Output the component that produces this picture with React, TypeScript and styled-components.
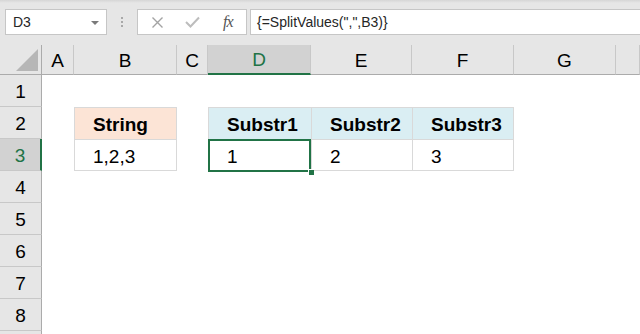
import * as React from 'react'
import styled, { createGlobalStyle, css } from 'styled-components'

const GlobalStyle = createGlobalStyle`
  html, body {
    margin: 0;
    padding: 0;
    background: #ffffff;
  }
  body {
    font-family: "Liberation Sans", Arial, sans-serif;
  }
`

const Window = styled.div`
  width: 640px;
  height: 334px;
  overflow: hidden;
  background: #ffffff;
`

const Toolbar = styled.div`
  height: 45px;
  box-sizing: border-box;
  padding: 9px 0 0 5px;
  display: flex;
  align-items: flex-start;
  background: linear-gradient(#d6d6d6 0px, #e6e6e6 3px, #e6e6e6 100%);
`

const NameBox = styled.div`
  width: 102px;
  height: 26px;
  box-sizing: border-box;
  border: 1px solid #c6c6c6;
  background: #ffffff;
  display: flex;
  align-items: center;
  justify-content: space-between;
  padding: 0 7px 0 7px;
  font-size: 14px;
  color: #262626;
`

const DropArrow = styled.span`
  width: 0;
  height: 0;
  border-left: 4px solid transparent;
  border-right: 4px solid transparent;
  border-top: 4px solid #7a7a7a;
  margin-top: 1px;
`

const Grip = styled.div`
  width: 30px;
  height: 26px;
  display: flex;
  flex-direction: column;
  align-items: center;
  justify-content: center;
  gap: 2px;
  span {
    width: 2px;
    height: 2px;
    background: #a8a8a8;
  }
`

const FxBox = styled.div`
  width: 110px;
  height: 26px;
  box-sizing: border-box;
  border: 1px solid #c6c6c6;
  background: #ffffff;
  display: flex;
  align-items: center;
  padding-left: 13px;
  gap: 21px;
`

const FxLabel = styled.span`
  font-family: "Liberation Serif", "Times New Roman", serif;
  font-style: italic;
  font-size: 16px;
  color: #555555;
  margin-left: 2px;
  letter-spacing: -1px;
`

const FormulaInput = styled.div`
  flex: 1;
  height: 26px;
  margin-left: 3px;
  margin-right: -4px;
  box-sizing: border-box;
  border: 1px solid #c6c6c6;
  background: #ffffff;
  display: flex;
  align-items: center;
  padding-left: 6px;
  font-size: 14px;
  color: #262626;
`

const Sheet = styled.div`
  display: grid;
  grid-template-columns: 42px 32px 103px 31px 103px 101px 102px 102px 1fr;
  grid-template-rows: 30px repeat(9, 32px);
  font-size: 19px;
  color: #000000;
`

const headerBase = css`
  box-sizing: border-box;
  background: #e6e6e6;
  display: flex;
  align-items: center;
  justify-content: center;
  padding-top: 2px;
`

const Corner = styled.div`
  ${headerBase};
  border-right: 1px solid #ababab;
  border-bottom: 1px solid #ababab;
  position: relative;
`

const CornerTriangle = styled.span`
  position: absolute;
  right: 3px;
  bottom: 3px;
  width: 0;
  height: 0;
  border-left: 22px solid transparent;
  border-bottom: 22px solid #b6b6b6;
`

const ColHead = styled.div<{ $active?: boolean }>`
  ${headerBase};
  border-right: 1px solid #c8c8c8;
  border-bottom: 1px solid #ababab;
  ${(p) =>
    p.$active &&
    css`
      background: #d2d2d2;
      color: #217346;
      border-bottom: 2px solid #217346;
    `}
`

const RowHead = styled.div<{ $active?: boolean }>`
  ${headerBase};
  border-right: 1px solid #ababab;
  border-bottom: 1px solid #c8c8c8;
  ${(p) =>
    p.$active &&
    css`
      background: #d2d2d2;
      color: #217346;
      border-right: 2px solid #217346;
    `}
`

type Fill = 'none' | 'peach' | 'blue'

const fills: Record<Fill, string> = {
  none: '#ffffff',
  peach: '#fce4d6',
  blue: '#daeef3',
}

const Cell = styled.div<{
  $fill?: Fill
  $bold?: boolean
  $boxed?: boolean
  $right?: boolean
  $bottom?: boolean
}>`
  position: relative;
  box-sizing: border-box;
  background: ${(p) => fills[p.$fill || 'none']};
  font-weight: ${(p) => (p.$bold ? 700 : 400)};
  display: flex;
  align-items: center;
  padding: 3px 0 0 18px;
  ${(p) =>
    p.$boxed &&
    css`
      border-top: 1px solid #d9d9d9;
      border-left: 1px solid #d9d9d9;
    `}
  ${(p) => p.$right && 'border-right: 1px solid #d9d9d9;'}
  ${(p) => p.$bottom && 'border-bottom: 1px solid #d9d9d9;'}
`

const Selection = styled.span`
  position: absolute;
  z-index: 2;
  left: -1px;
  top: -1px;
  right: 0;
  bottom: -2px;
  border: 2px solid #217346;
  pointer-events: none;
  &::after {
    content: '';
    position: absolute;
    right: -5px;
    bottom: -5px;
    width: 5px;
    height: 5px;
    background: #217346;
    border: 1px solid #ffffff;
    border-right: none;
    border-bottom: none;
  }
`

const columns = ['A', 'B', 'C', 'D', 'E', 'F', 'G', '']

type CellDef = { text?: string; fill?: Fill; bold?: boolean; boxed?: boolean; right?: boolean; bottom?: boolean; active?: boolean }

const rowData: Record<number, CellDef[]> = {
  2: [
    {},
    { text: 'String', fill: 'peach', bold: true, boxed: true, right: true },
    {},
    { text: 'Substr1', fill: 'blue', bold: true, boxed: true },
    { text: 'Substr2', fill: 'blue', bold: true, boxed: true },
    { text: 'Substr3', fill: 'blue', bold: true, boxed: true, right: true },
    {},
    {},
  ],
  3: [
    {},
    { text: '1,2,3', boxed: true, right: true, bottom: true },
    {},
    { text: '1', boxed: true, bottom: true, active: true },
    { text: '2', boxed: true, bottom: true },
    { text: '3', boxed: true, right: true, bottom: true },
    {},
    {},
  ],
}

// row 9 only peeks in at the bottom edge, so its label stays out of view
const rows = [1, 2, 3, 4, 5, 6, 7, 8, 9]

const CrossIcon = () => (
  <svg width="13" height="13" viewBox="0 0 13 13">
    <path d="M1.5 1.5 L11.5 11.5 M11.5 1.5 L1.5 11.5" stroke="#a3a3a3" strokeWidth="1.4" fill="none" />
  </svg>
)

const CheckIcon = () => (
  <svg width="15" height="12" viewBox="0 0 15 12">
    <path d="M1 6 L5.5 10.5 L14 1.5" stroke="#bdbdbd" strokeWidth="2" fill="none" />
  </svg>
)

export default function App() {
  return (
    <Window>
      <GlobalStyle />
      <Toolbar>
        <NameBox>
          D3
          <DropArrow />
        </NameBox>
        <Grip>
          <span />
          <span />
          <span />
        </Grip>
        <FxBox>
          <CrossIcon />
          <CheckIcon />
          <FxLabel>fx</FxLabel>
        </FxBox>
        <FormulaInput>{'{=SplitValues(",",B3)}'}</FormulaInput>
      </Toolbar>
      <Sheet>
        <Corner>
          <CornerTriangle />
        </Corner>
        {columns.map((c, i) => (
          <ColHead key={i} $active={c === 'D'}>
            {c}
          </ColHead>
        ))}
        {rows.map((r) => (
          <React.Fragment key={r}>
            <RowHead $active={r === 3}>{r < 9 ? r : ''}</RowHead>
            {(rowData[r] || columns.map(() => ({}) as CellDef)).map((cell, i) => (
              <Cell
                key={i}
                $fill={cell.fill}
                $bold={cell.bold}
                $boxed={cell.boxed}
                $right={cell.right}
                $bottom={cell.bottom}
              >
                {cell.text}
                {cell.active && <Selection />}
              </Cell>
            ))}
          </React.Fragment>
        ))}
      </Sheet>
    </Window>
  )
}
